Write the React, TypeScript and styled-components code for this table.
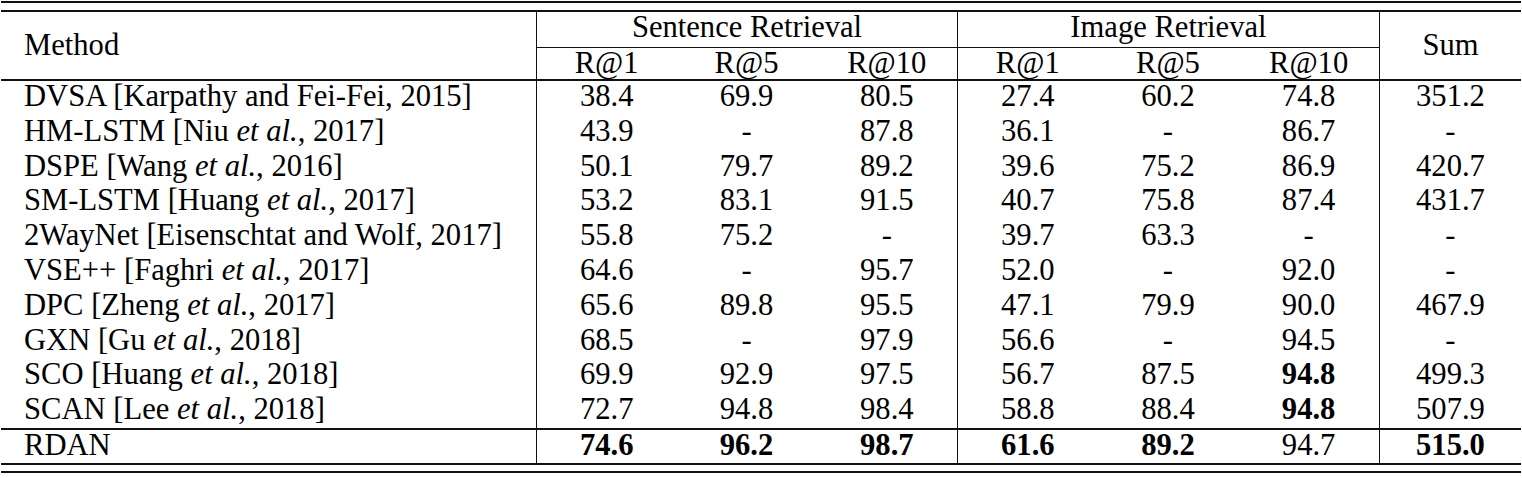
import React from 'react';
import styled, { createGlobalStyle } from 'styled-components';

const serif = `"Liberation Serif", "Times New Roman", Times, serif`

const GlobalStyle = createGlobalStyle`
  html, body {
    margin: 0;
    padding: 0;
    background: #fff;
    font-family: ${serif};
  }
`

const Page = styled.div`
  width: 1520px;
  margin: 1px 1px 0;
  padding: 7px 0 6px;
  border-top: 2px solid #111;
  border-bottom: 2px solid #111;
  font-family: ${serif};
  font-size: 30.6px;
  color: #000;
`

const Grid = styled.div`
  display: grid;
  grid-template-columns: 535px repeat(3, 140.33px) repeat(3, 140.67px) 142px;
  grid-template-rows: 36px 33px repeat(9, 34.8px) 35.8px 33px;
  border-top: 2px solid #111;
  border-bottom: 2px solid #111;
`

const Cell = styled.div<{ $left?: boolean; $rule?: number; $bold?: boolean }>`
  box-sizing: border-box;
  display: flex;
  justify-content: center;
  align-items: flex-start;
  padding-top: 1px;
  line-height: 28px;
  white-space: nowrap;
  font-weight: ${p => (p.$bold ? 700 : 400)};
  border-left: ${p => (p.$left ? '1px solid #111' : 'none')};
  border-bottom: ${p => (p.$rule ? `${p.$rule}px solid #111` : 'none')};
`

const SpanHead = styled(Cell)<{ $align?: string }>`
  grid-row: span 2;
  align-items: center;
  justify-content: ${p => p.$align || 'center'};
  padding-left: ${p => (p.$align ? '23px' : '0')};
  padding-bottom: 2px;
`

const GroupHead = styled(Cell)`
  grid-column: span 3;
`

const MethodCell = styled(Cell)`
  justify-content: flex-start;
  padding-left: 23px;
`

type Row = { name: React.ReactNode; values: string[]; bold?: number[] }

const al = <i>et al.</i>

const rows: Row[] = [
  { name: <>DVSA [Karpathy and Fei-Fei, 2015]</>, values: ['38.4', '69.9', '80.5', '27.4', '60.2', '74.8', '351.2'] },
  { name: <>HM-LSTM [Niu {al}, 2017]</>, values: ['43.9', '-', '87.8', '36.1', '-', '86.7', '-'] },
  { name: <>DSPE [Wang {al}, 2016]</>, values: ['50.1', '79.7', '89.2', '39.6', '75.2', '86.9', '420.7'] },
  { name: <>SM-LSTM [Huang {al}, 2017]</>, values: ['53.2', '83.1', '91.5', '40.7', '75.8', '87.4', '431.7'] },
  { name: <>2WayNet [Eisenschtat and Wolf, 2017]</>, values: ['55.8', '75.2', '-', '39.7', '63.3', '-', '-'] },
  { name: <>VSE++ [Faghri {al}, 2017]</>, values: ['64.6', '-', '95.7', '52.0', '-', '92.0', '-'] },
  { name: <>DPC [Zheng {al}, 2017]</>, values: ['65.6', '89.8', '95.5', '47.1', '79.9', '90.0', '467.9'] },
  { name: <>GXN [Gu {al}, 2018]</>, values: ['68.5', '-', '97.9', '56.6', '-', '94.5', '-'] },
  { name: <>SCO [Huang {al}, 2018]</>, values: ['69.9', '92.9', '97.5', '56.7', '87.5', '94.8', '499.3'], bold: [5] },
  { name: <>SCAN [Lee {al}, 2018]</>, values: ['72.7', '94.8', '98.4', '58.8', '88.4', '94.8', '507.9'], bold: [5] },
  { name: <>RDAN</>, values: ['74.6', '96.2', '98.7', '61.6', '89.2', '94.7', '515.0'], bold: [0, 1, 2, 3, 4, 6] },
]

const dividers = [0, 3, 6]
const subHeads = ['R@1', 'R@5', 'R@10', 'R@1', 'R@5', 'R@10']

const App: React.FC = () => {
  return (
    <>
      <GlobalStyle />
      <Page>
        <Grid>
          <SpanHead $align="flex-start" $rule={2}>Method</SpanHead>
          <GroupHead $left $rule={1}>Sentence Retrieval</GroupHead>
          <GroupHead $left $rule={1}>Image Retrieval</GroupHead>
          <SpanHead $left $rule={2}>Sum</SpanHead>
          {subHeads.map((h, i) => (
            <Cell key={'h' + i} $left={i === 0 || i === 3} $rule={2}>{h}</Cell>
          ))}
          {rows.map((row, r) => {
            const rule = r === rows.length - 2 ? 2 : 0
            return (
              <React.Fragment key={r}>
                <MethodCell $rule={rule}><span>{row.name}</span></MethodCell>
                {row.values.map((v, i) => (
                  <Cell
                    key={i}
                    $left={dividers.includes(i)}
                    $rule={rule}
                    $bold={row.bold?.includes(i)}
                  >
                    {v}
                  </Cell>
                ))}
              </React.Fragment>
            )
          })}
        </Grid>
      </Page>
    </>
  );
}

export default App;
